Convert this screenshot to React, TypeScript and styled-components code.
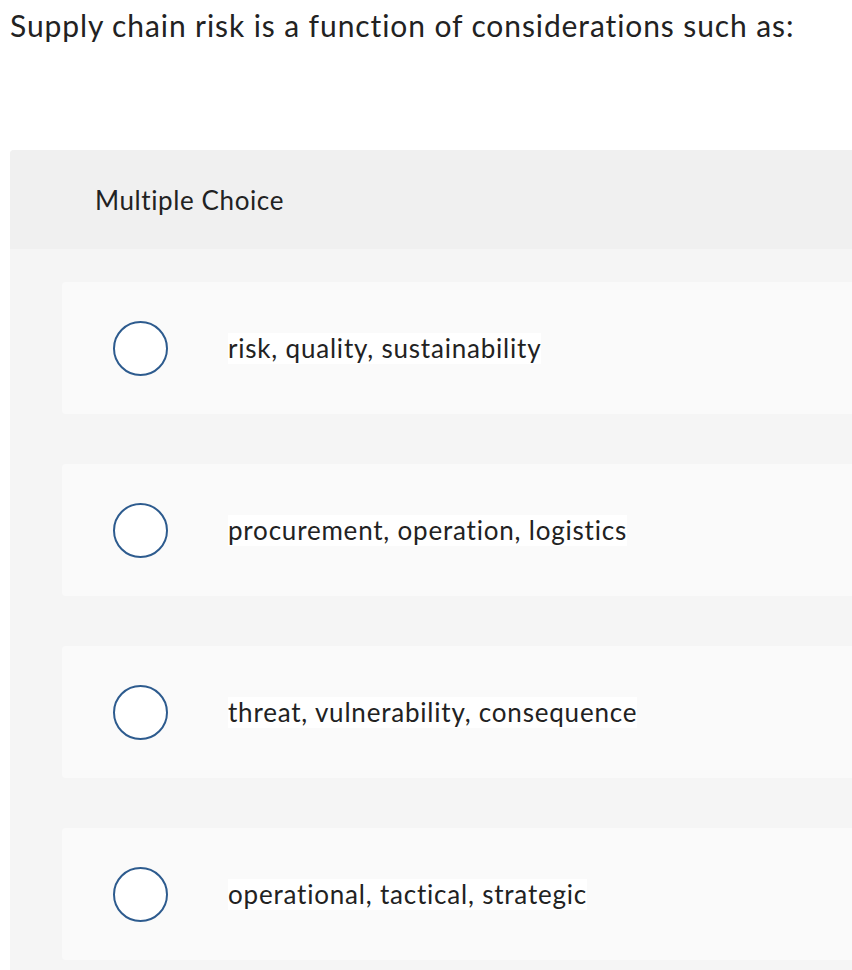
import * as React from "react";
import { FC } from "react";
import styled, { createGlobalStyle } from "styled-components";

const GlobalStyle = createGlobalStyle`
  html, body {
    margin: 0;
    padding: 0;
    background-color: #fff;
    overflow: hidden;
  }
  body {
    font-family: Lato, "Open Sans", sans-serif;
    font-variant-ligatures: none;
    color: #222;
  }
`;

const Page = styled.div`
  width: 852px;
  height: 970px;
  overflow: hidden;
`;

const Question = styled.h1`
  margin: 0;
  padding: 7px 0 0 10px;
  height: 150px;
  box-sizing: border-box;
  font-size: 30px;
  font-weight: 400;
  letter-spacing: 0.9px;
  line-height: 36px;
  color: #222;
`;

const Panel = styled.section`
  margin-left: 10px;
  width: 900px;
  border-radius: 4px 0 0 0;
  overflow: hidden;
  background-color: #f5f5f5;
`;

const PanelHeader = styled.div`
  height: 99px;
  background-color: #f0f0f0;
  padding-left: 85px;
  display: flex;
  align-items: center;
  font-size: 26px;
  letter-spacing: 0.6px;
  color: #222;
`;

const OptionList = styled.div`
  display: flex;
  flex-direction: column;
  gap: 50px;
  padding: 33px 0 20px 52px;
`;

const OptionCard = styled.label`
  height: 132px;
  display: flex;
  align-items: center;
  padding-left: 51px;
  background-color: #fafafa;
  border-radius: 4px 0 0 4px;
  cursor: pointer;
`;

const Radio = styled.span`
  flex: none;
  width: 55px;
  height: 55px;
  box-sizing: border-box;
  border: 2px solid #2d5b8e;
  border-radius: 50%;
  background-color: #fff;
  margin-right: 60px;
`;

const OptionText = styled.span`
  background-color: #fff;
  font-size: 26px;
  letter-spacing: 0.8px;
  line-height: 31px;
  color: #222;
`;

const options: string[] = [
  "risk, quality, sustainability",
  "procurement, operation, logistics",
  "threat, vulnerability, consequence",
  "operational, tactical, strategic",
];

const App: FC = () => {
  return (
    <Page>
      <GlobalStyle />
      <Question>Supply chain risk is a function of considerations such as:</Question>
      <Panel>
        <PanelHeader>Multiple Choice</PanelHeader>
        <OptionList>
          {options.map((option) => (
            <OptionCard key={option}>
              <Radio />
              <OptionText>{option}</OptionText>
            </OptionCard>
          ))}
        </OptionList>
      </Panel>
    </Page>
  );
};

export default App;
